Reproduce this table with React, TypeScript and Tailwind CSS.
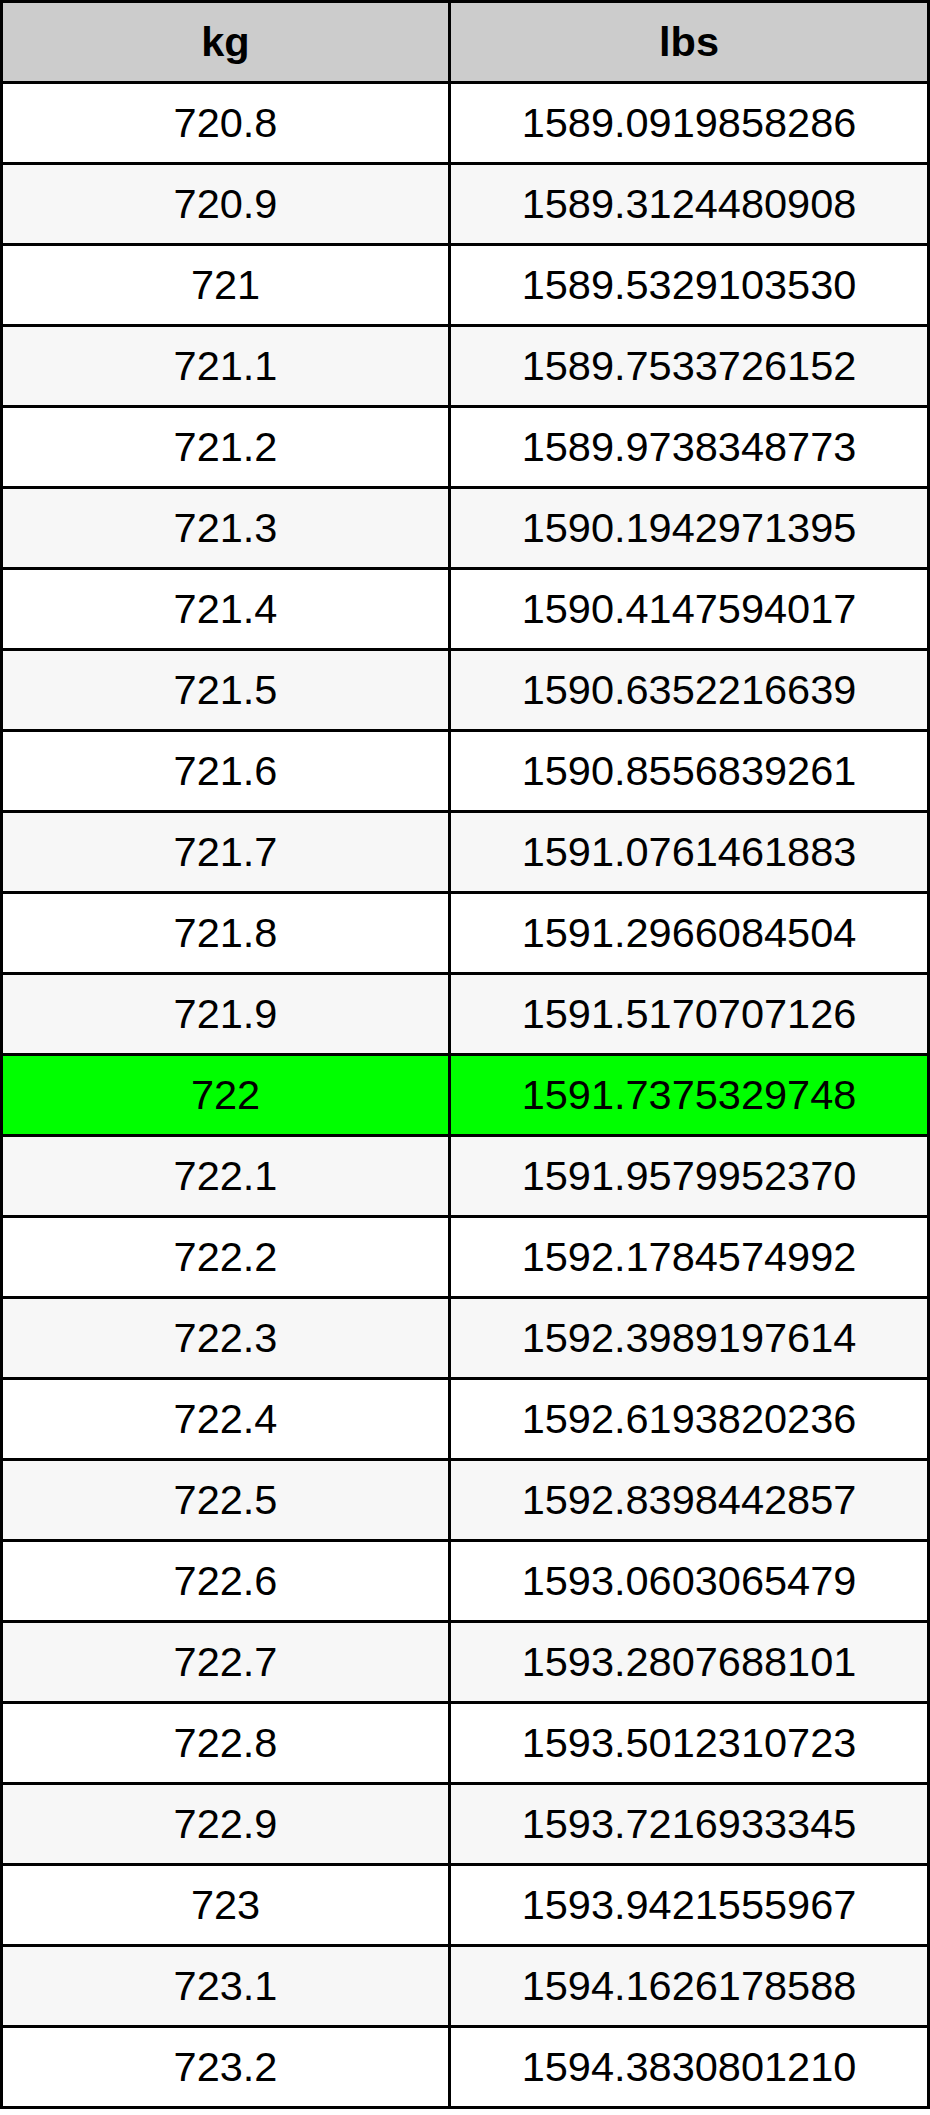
import React from "react";

const rows: [string, string][] = [
  ["720.8", "1589.0919858286"],
  ["720.9", "1589.3124480908"],
  ["721", "1589.5329103530"],
  ["721.1", "1589.7533726152"],
  ["721.2", "1589.9738348773"],
  ["721.3", "1590.1942971395"],
  ["721.4", "1590.4147594017"],
  ["721.5", "1590.6352216639"],
  ["721.6", "1590.8556839261"],
  ["721.7", "1591.0761461883"],
  ["721.8", "1591.2966084504"],
  ["721.9", "1591.5170707126"],
  ["722", "1591.7375329748"],
  ["722.1", "1591.9579952370"],
  ["722.2", "1592.1784574992"],
  ["722.3", "1592.3989197614"],
  ["722.4", "1592.6193820236"],
  ["722.5", "1592.8398442857"],
  ["722.6", "1593.0603065479"],
  ["722.7", "1593.2807688101"],
  ["722.8", "1593.5012310723"],
  ["722.9", "1593.7216933345"],
  ["723", "1593.9421555967"],
  ["723.1", "1594.1626178588"],
  ["723.2", "1594.3830801210"],
];

export default function App() {
  return (
    <div className="w-[930px] bg-white" style={{ fontFamily: '"Liberation Sans", Arial, sans-serif' }}>
      <div className="grid grid-cols-[445px_476px] auto-rows-[78px] gap-[3px] p-[3px] bg-black text-[41.5px] text-black">
        <div className="bg-[#cccccc] flex items-center justify-center font-bold">kg</div>
        <div className="bg-[#cccccc] flex items-center justify-center font-bold">lbs</div>
        {rows.map(([kg, lbs], i) => {
          const bg = kg === "722" ? "bg-[#00ff00]" : i % 2 === 1 ? "bg-[#f7f7f7]" : "bg-white";
          return (
            <React.Fragment key={kg}>
              <div className={`${bg} flex items-center justify-center`}>{kg}</div>
              <div className={`${bg} flex items-center justify-center`}>{lbs}</div>
            </React.Fragment>
          );
        })}
      </div>
    </div>
  );
}
